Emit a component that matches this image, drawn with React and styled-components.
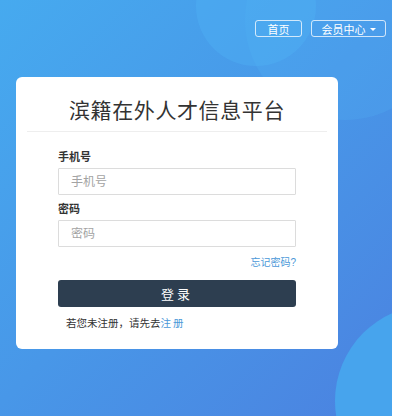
import React from 'react';
import styled, { createGlobalStyle } from 'styled-components';

const GlobalStyle = createGlobalStyle`
  html, body {
    margin: 0;
    padding: 0;
    background: #fff;
  }
  body {
    font-family: "Liberation Sans", "Noto Sans CJK SC", sans-serif;
  }
  * {
    box-sizing: border-box;
  }
`;

const Page = styled.div`
  position: relative;
  width: 392px;
  height: 416px;
  overflow: hidden;
  background: linear-gradient(135deg, #46aaef 0%, #4897e8 50%, #4b82e0 100%);
  padding: 20px 6px 0 16px;
  display: flex;
  flex-direction: column;
`;

const Bubble = styled.div`
  position: absolute;
  border-radius: 50%;
  left: ${(p) => p.$x}px;
  top: ${(p) => p.$y}px;
  width: ${(p) => p.$r * 2}px;
  height: ${(p) => p.$r * 2}px;
  background: ${(p) => p.$bg};
`;

const Nav = styled.nav`
  position: relative;
  display: flex;
  justify-content: flex-end;
  gap: 9px;
  height: 17px;
`;

const NavButton = styled.a`
  display: flex;
  align-items: center;
  justify-content: center;
  gap: 4px;
  width: ${(p) => p.$w}px;
  height: 17px;
  border: 1px solid rgba(255, 255, 255, 0.75);
  border-radius: 3px;
  color: #fff;
  font-size: 11px;
  text-decoration: none;
`;

const Caret = styled.span`
  width: 0;
  height: 0;
  border-left: 3px solid transparent;
  border-right: 3px solid transparent;
  border-top: 3px solid #fff;
  margin-top: 1px;
`;

const Card = styled.div`
  position: relative;
  margin-top: 40px;
  width: 322px;
  height: 272px;
  background: #fff;
  border-radius: 6px;
  padding: 0 11px;
`;

const Title = styled.h1`
  margin: 0;
  height: 55px;
  display: flex;
  align-items: center;
  justify-content: center;
  padding-top: 10px;
  border-bottom: 1px solid #eeeeee;
  font-size: 21px;
  font-weight: normal;
  color: #333;
  letter-spacing: 0.6px;
`;

const Form = styled.form`
  display: flex;
  flex-direction: column;
  padding: 18px 31px 0;
`;

const Label = styled.label`
  font-size: 11px;
  font-weight: bold;
  color: #333;
  line-height: 14px;
  margin-bottom: 4px;
`;

const Input = styled.input`
  width: 238px;
  height: 27px;
  border: 1px solid #dcdcdc;
  border-radius: 1px;
  padding: 0 12px;
  font-family: inherit;
  font-size: 12px;
  color: #333;
  margin-bottom: ${(p) => p.$gap}px;
  &::placeholder {
    color: #a3a3a3;
  }
`;

const Forgot = styled.a`
  align-self: flex-end;
  margin-top: 10px;
  font-size: 10px;
  color: #4a98d8;
  text-decoration: none;
  line-height: 12px;
`;

const Submit = styled.button`
  margin-top: 11px;
  width: 238px;
  height: 27px;
  border: none;
  border-radius: 3px;
  background: #2d3e50;
  color: #fff;
  font-family: inherit;
  font-size: 13px;
  letter-spacing: 3px;
`;

const Hint = styled.p`
  margin: 10px 0 0 8px;
  font-size: 10.5px;
  color: #333;
  line-height: 12px;
`;

const Link = styled.a`
  color: #4a98d8;
  text-decoration: none;
  letter-spacing: 2px;
`;

export default function App() {
  return (
    <>
      <GlobalStyle />
      <Page>
        <Bubble $x={245} $y={-80} $r={100} $bg="rgba(80, 180, 245, 0.22)" />
        <Bubble $x={196} $y={-54} $r={60} $bg="rgba(80, 180, 245, 0.35)" />
        <Bubble $x={335} $y={305} $r={96} $bg="#47a4ed" />
        <Nav>
          <NavButton $w={47}>首页</NavButton>
          <NavButton $w={75}>
            会员中心 <Caret />
          </NavButton>
        </Nav>
        <Card>
          <Title>滨籍在外人才信息平台</Title>
          <Form onSubmit={(e) => e.preventDefault()}>
            <Label>手机号</Label>
            <Input $gap={7} placeholder="手机号" />
            <Label>密码</Label>
            <Input $gap={0} type="password" placeholder="密码" />
            <Forgot>忘记密码?</Forgot>
            <Submit>登录</Submit>
            <Hint>
              若您未注册，请先去<Link>注册</Link>
            </Hint>
          </Form>
        </Card>
      </Page>
    </>
  );
}
